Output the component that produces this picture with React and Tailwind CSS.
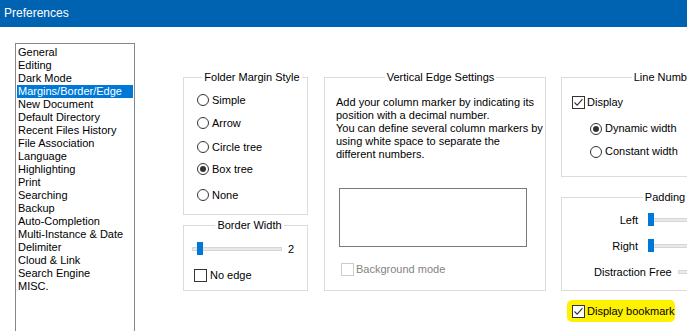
import React from 'react'

const pages = [
  'General',
  'Editing',
  'Dark Mode',
  'Margins/Border/Edge',
  'New Document',
  'Default Directory',
  'Recent Files History',
  'File Association',
  'Language',
  'Highlighting',
  'Print',
  'Searching',
  'Backup',
  'Auto-Completion',
  'Multi-Instance & Date',
  'Delimiter',
  'Cloud & Link',
  'Search Engine',
  'MISC.',
]

function Radio({ checked }) {
  return (
    <span className="flex h-[12px] w-[12px] shrink-0 items-center justify-center rounded-full border border-[#333333] bg-white">
      {checked && <span className="h-[6px] w-[6px] rounded-full bg-[#333333]" />}
    </span>
  )
}

function Checkbox({ checked, disabled }) {
  return (
    <span
      className={
        disabled
          ? 'flex h-[13px] w-[13px] shrink-0 items-center justify-center border border-[#cccccc] bg-white'
          : 'flex h-[13px] w-[13px] shrink-0 items-center justify-center border border-[#333333] bg-white'
      }
    >
      {checked && (
        <svg width="11" height="11" viewBox="0 0 11 11" fill="none">
          <path d="M1.5 5.5 L4.2 8.2 L9.5 2.2" stroke="#333333" strokeWidth="1.1" />
        </svg>
      )}
    </span>
  )
}

function Group({ title, className, children }) {
  // fieldset/legend draws the classic Win32 group box with the title cut into the border
  return (
    <fieldset className={`border border-[#dcdcdc] ${className}`}>
      <legend className="mx-auto h-[13px] whitespace-nowrap px-[2px] leading-[13px]">{title}</legend>
      {children}
    </fieldset>
  )
}

function Slider({ width, thumb }) {
  return (
    <span className="relative flex h-[14px] items-center" style={{ width }}>
      <span className="h-[4px] w-full border border-[#d6d6d6] bg-[#e7eaea]" />
      <span className="absolute top-0 h-[13px] w-[6px] bg-[#0078d7]" style={{ left: thumb }} />
    </span>
  )
}

export default function App() {
  return (
    <div className="h-[331px] w-[687px] overflow-hidden whitespace-nowrap bg-white text-[11px] leading-[13px] text-black [font-family:'Liberation_Sans',Arial,sans-serif]">
      <div className="flex h-[27px] items-center bg-[#0063b1] pl-[4px] text-[12px] text-white">Preferences</div>

      <div className="flex pl-[15px] pt-[16px]">
        {/* category list */}
        <div className="h-[300px] w-[120px] shrink-0 border border-[#828790] p-px pt-[2px]">
          {pages.map((p) =>
            p === 'Margins/Border/Edge' ? (
              <div key={p} className="h-[13px] bg-[#0078d7] pl-px text-white">
                {p}
              </div>
            ) : (
              <div key={p} className="h-[13px] pl-px">
                {p}
              </div>
            )
          )}
        </div>

        {/* folder margin + border width */}
        <div className="ml-[48px] mt-[28px] w-[125px] shrink-0">
          <Group title="Folder Margin Style" className="pb-[12px] pl-[13px]">
            {[
              ['Simple', false, 'mt-[9px]'],
              ['Arrow', false, 'mt-[9px]'],
              ['Circle tree', false, 'mt-[10px]'],
              ['Box tree', true, 'mt-[8px]'],
              ['None', false, 'mt-[12px]'],
            ].map(([label, on, mt]) => (
              <div key={label} className={`flex h-[14px] items-center gap-[3px] ${mt}`}>
                <Radio checked={on} />
                <span>{label}</span>
              </div>
            ))}
          </Group>

          <Group title="Border Width" className="mt-[4px] pb-[8px] pl-[8px]">
            <div className="mt-[10px] flex h-[14px] items-center gap-[6px]">
              <Slider width={90} thumb={5} />
              <span>2</span>
            </div>
            <div className="ml-[2px] mt-[13px] flex h-[13px] items-center gap-[3px]">
              <Checkbox />
              <span>No edge</span>
            </div>
          </Group>
        </div>

        {/* vertical edge */}
        <div className="ml-[16px] mt-[28px] w-[222px] shrink-0">
          <Group title="Vertical Edge Settings" className="pb-[14px] pl-[11px]">
            <p className="mt-[12px]">
              Add your column marker by indicating its
              <br />
              position with a decimal number.
              <br />
              You can define several column markers by
              <br />
              using white space to separate the
              <br />
              different numbers.
            </p>
            <div className="ml-[3px] mt-[27px] h-[59px] w-[188px] border border-[#7a7a7a]" />
            <div className="ml-[5px] mt-[16px] flex h-[13px] items-center gap-[2px] text-[#838383]">
              <Checkbox disabled />
              <span>Background mode</span>
            </div>
          </Group>
        </div>

        {/* line numbers, padding, bookmark */}
        <div className="ml-[15px] mt-[28px] w-[204px] shrink-0">
          <Group title="Line Numbers" className="pb-[18px] pl-[10px]">
            <div className="mt-[12px] flex h-[13px] items-center gap-[2px]">
              <Checkbox checked />
              <span>Display</span>
            </div>
            <div className="ml-[18px] mt-[13px] flex h-[13px] items-center gap-[3px]">
              <Radio checked />
              <span>Dynamic width</span>
            </div>
            <div className="ml-[18px] mt-[10px] flex h-[13px] items-center gap-[3px]">
              <Radio />
              <span>Constant width</span>
            </div>
          </Group>

          <Group title="Padding" className="mt-[14px] pb-[11px]">
            <div className="mt-[9px] flex h-[14px] items-center">
              <span className="w-[76px] shrink-0 text-right">Left</span>
              <span className="ml-[10px]">
                <Slider width={120} thumb={0} />
              </span>
            </div>
            <div className="mt-[12px] flex h-[14px] items-center">
              <span className="w-[76px] shrink-0 text-right">Right</span>
              <span className="ml-[10px]">
                <Slider width={120} thumb={0} />
              </span>
            </div>
            <div className="mt-[12px] flex h-[14px] items-center">
              <span className="w-[116px] shrink-0 pl-[32px]">Distraction Free</span>
              <span className="h-[4px] w-[60px] shrink-0 border border-[#d6d6d6] bg-[#e7eaea]" />
            </div>
          </Group>

          <div className="ml-[6px] mt-[9px] flex h-[22px] w-fit items-center gap-[2px] rounded-[5px] bg-[#fff200] pl-[5px] pr-[1px]">
            <Checkbox checked />
            <span>Display bookmark</span>
          </div>
        </div>
      </div>
    </div>
  )
}
